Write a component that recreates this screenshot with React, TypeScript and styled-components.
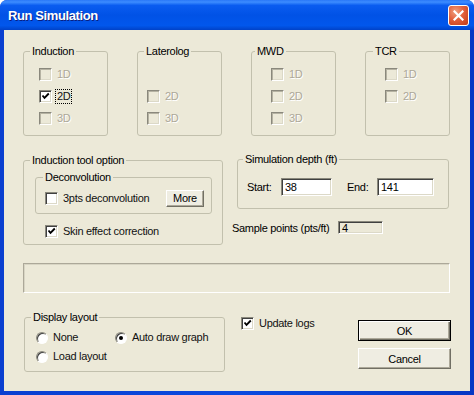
import { FC, ReactNode } from "react";
import styled, { createGlobalStyle } from "styled-components";

const GlobalStyle = createGlobalStyle`
    body {
        margin: 0;
        background: #fff;
        font-family: "Liberation Sans", Arial, sans-serif;
        font-size: 11px;
        letter-spacing: -0.3px;
    }
`;

type GroupProps = { title: string; w?: number; h: number; pad?: string; ml?: number; lx?: number; children: ReactNode };

// group box = fieldset + legend, padding lives on the inner div so the legend stays put
const Group: FC<GroupProps> = ({ title, w, h, pad, ml, lx, children }) => (
    <SGroup $w={w} $h={h} $ml={ml}>
        <SLegend $lx={lx}>{title}</SLegend>
        <SGroupBody $pad={pad}>{children}</SGroupBody>
    </SGroup>
);

export const App: FC = () => {
    return (
        <>
            <GlobalStyle />
            <SWindow>
                <STitleBar>
                    <STitle>Run Simulation</STitle>
                    <SClose aria-label="close">
                        <svg width="11" height="11" viewBox="0 0 11 11">
                            <path d="M1.5 1.5 L9.5 9.5 M9.5 1.5 L1.5 9.5" stroke="#fff" strokeWidth="2.2" strokeLinecap="square" />
                        </svg>
                    </SClose>
                </STitleBar>

                <SBody>
                    {/* tool groups */}
                    <SToolRow>
                        <Group title="Induction" h={91} pad="5px 0 0 15px">
                            <SList>
                                <Check label="1D" disabled />
                                <Check label="2D" checked focused />
                                <Check label="3D" disabled />
                            </SList>
                        </Group>
                        <Group title="Laterolog" h={91} pad="5px 0 0 9px">
                            <SList>
                                <SBlank />
                                <Check label="2D" disabled />
                                <Check label="3D" disabled />
                            </SList>
                        </Group>
                        <Group title="MWD" h={91} pad="5px 0 0 19px" lx={3}>
                            <SList>
                                <Check label="1D" disabled />
                                <Check label="2D" disabled />
                                <Check label="3D" disabled />
                            </SList>
                        </Group>
                        <Group title="TCR" h={91} pad="5px 0 0 19px" lx={7}>
                            <SList>
                                <Check label="1D" disabled />
                                <Check label="2D" disabled />
                            </SList>
                        </Group>
                    </SToolRow>

                    {/* options */}
                    <SOptionRow>
                        <Group title="Induction tool option" w={200} h={91} pad="4px 11px 0">
                            <Group title="Deconvolution" w={177} h={43} pad="3px 7px 0 9px" lx={7}>
                                <SSpread>
                                    <Check label="3pts deconvolution" />
                                    <SButton $w={38} $h={17}>More</SButton>
                                </SSpread>
                            </Group>
                            <SSkinRow>
                                <Check label="Skin effect correction" checked />
                            </SSkinRow>
                        </Group>

                        <SDepthColumn>
                            <Group title="Simulation depth (ft)" w={212} h={56} pad="10px 9px 0" ml={5} lx={5}>
                                <SFieldRow>
                                    <SFieldLabel $w={34}>Start:</SFieldLabel>
                                    <SField $w={51}>38</SField>
                                    <SFieldLabel $w={30} $ml={15}>End:</SFieldLabel>
                                    <SField $w={57}>141</SField>
                                </SFieldRow>
                            </Group>
                            <SSampleRow>
                                <SFieldLabel $w={106}>Sample points (pts/ft)</SFieldLabel>
                                <SField $w={45} $h={13} $readOnly>4</SField>
                            </SSampleRow>
                        </SDepthColumn>
                    </SOptionRow>

                    <SStatus />

                    {/* bottom */}
                    <SBottomRow>
                        <Group title="Display layout" w={201} h={61} pad="4px 11px 0" ml={1}>
                            <SRadioGrid>
                                <Radio label="None" />
                                <Radio label="Auto draw graph" checked />
                                <Radio label="Load layout" />
                            </SRadioGrid>
                        </Group>
                        <SUpdate>
                            <Check label="Update logs" checked />
                        </SUpdate>
                        <SButtons>
                            <SButton $w={93} $h={21} $default>OK</SButton>
                            <SButton $w={93} $h={21}>Cancel</SButton>
                        </SButtons>
                    </SBottomRow>
                </SBody>
            </SWindow>
        </>
    );
};

export default App;

type CheckProps = { label: string; checked?: boolean; disabled?: boolean; focused?: boolean };

const Check: FC<CheckProps> = ({ label, checked, disabled, focused }) => (
    <SCheckItem>
        <SBox $disabled={disabled}>
            {checked && (
                <svg width="9" height="9" viewBox="0 0 9 9">
                    <path d="M1.5 3.5 L3.5 5.8 L7.8 1.5" stroke={disabled ? "#aca899" : "#000"} strokeWidth="1.9" fill="none" />
                </svg>
            )}
        </SBox>
        <SText $disabled={disabled} $focused={focused}>{label}</SText>
    </SCheckItem>
);

const Radio: FC<{ label: string; checked?: boolean }> = ({ label, checked }) => (
    <SCheckItem>
        <SRadio>{checked && <SDot />}</SRadio>
        <SText>{label}</SText>
    </SCheckItem>
);

const SWindow = styled.div`
    width: 474px;
    height: 395px;
    display: flex;
    flex-direction: column;
    background: linear-gradient(to right, #0a3fd0, #0b4be0 50%, #0637c4);
    border-radius: 7px 7px 0 0;
    overflow: hidden;
`;

const STitleBar = styled.div`
    height: 30px;
    flex: none;
    display: flex;
    align-items: center;
    justify-content: space-between;
    padding: 0 5px 0 8px;
    background: linear-gradient(180deg, #2a78f8 0%, #3d8cff 7%, #0a5cf0 18%, #0152e6 50%, #0157ec 85%, #0042c8 100%);
`;

const STitle = styled.span`
    color: #fff;
    font-weight: bold;
    font-size: 13px;
    text-shadow: 1px 1px 0 #0a1e80;
    letter-spacing: -0.4px;
`;

const SClose = styled.div`
    width: 21px;
    height: 21px;
    box-sizing: border-box;
    border: 1px solid #fff;
    border-radius: 3px;
    display: flex;
    align-items: center;
    justify-content: center;
    background: radial-gradient(circle at 35% 30%, #f0a080 0%, #e2603c 45%, #c23a14 100%);
`;

const SBody = styled.div`
    flex: 1;
    margin: 0 4px 4px;
    background: #ece9d8;
    padding: 15px 19px 0;
    display: flex;
    flex-direction: column;
`;

const SGroup = styled.fieldset<{ $w?: number; $h: number; $ml?: number }>`
    margin: 0 0 0 ${p => p.$ml ?? 0}px;
    padding: 0;
    width: ${p => (p.$w ? `${p.$w}px` : "auto")};
    height: ${p => p.$h}px;
    box-sizing: border-box;
    min-width: 0;
    border: 1px solid #c2c0ad;
    border-radius: 3px;
`;

const SLegend = styled.legend<{ $lx?: number }>`
    padding: 0 2px;
    margin-left: ${p => p.$lx ?? 6}px;
    line-height: 13px;
    font-size: 11px;
    color: #000;
`;

const SGroupBody = styled.div<{ $pad?: string }>`
    padding: ${p => p.$pad ?? "0"};
`;

const SToolRow = styled.div`
    display: grid;
    grid-template-columns: repeat(4, 85px);
    column-gap: 29px;
`;

const SList = styled.div`
    display: flex;
    flex-direction: column;
    & > * {
        height: 22px;
    }
`;

const SBlank = styled.div``;

const SCheckItem = styled.label`
    display: flex;
    align-items: center;
    gap: 5px;
    white-space: nowrap;
`;

const SBox = styled.span<{ $disabled?: boolean }>`
    width: 13px;
    height: 13px;
    box-sizing: border-box;
    flex: none;
    display: flex;
    align-items: center;
    justify-content: center;
    border: 1px solid;
    border-color: #8a887c #fff #fff #8a887c;
    box-shadow: inset 1px 1px 0 ${p => (p.$disabled ? "#b5b2a2" : "#404040")}, inset -1px -1px 0 #dcd9c8;
    background: ${p => (p.$disabled ? "#ece9d8" : "#fff")};
`;

const SRadio = styled.span`
    width: 12px;
    height: 12px;
    box-sizing: border-box;
    flex: none;
    border-radius: 50%;
    border: 1px solid;
    border-color: #8a887c #fff #fff #8a887c;
    box-shadow: inset 1px 1px 0 #404040;
    background: #fff;
    display: flex;
    align-items: center;
    justify-content: center;
`;

const SDot = styled.span`
    width: 4px;
    height: 4px;
    border-radius: 50%;
    background: #000;
`;

const SText = styled.span<{ $disabled?: boolean; $focused?: boolean }>`
    color: ${p => (p.$disabled ? "#aca899" : "#111")};
    text-shadow: ${p => (p.$disabled ? "1px 1px 0 #fff" : "none")};
    outline: ${p => (p.$focused ? "1px dotted #000" : "none")};
    padding: 0 1px;
    margin-left: -1px;
    line-height: 13px;
`;

const SOptionRow = styled.div`
    display: flex;
    margin-top: 18px;
`;

const SSpread = styled.div`
    display: flex;
    align-items: center;
    justify-content: space-between;
    height: 22px;
`;

const SSkinRow = styled.div`
    display: flex;
    align-items: center;
    height: 22px;
    margin: 6px 0 0 10px;
`;

const SDepthColumn = styled.div`
    display: flex;
    flex-direction: column;
    margin-left: 9px;
    margin-top: -1px;
`;

const SFieldRow = styled.div`
    display: flex;
    align-items: center;
    height: 22px;
`;

const SFieldLabel = styled.span<{ $w: number; $ml?: number }>`
    width: ${p => p.$w}px;
    margin-left: ${p => p.$ml ?? 0}px;
    flex: none;
    white-space: nowrap;
`;

const SField = styled.div<{ $w: number; $h?: number; $readOnly?: boolean }>`
    width: ${p => p.$w}px;
    height: ${p => p.$h ?? 18}px;
    box-sizing: border-box;
    flex: none;
    display: flex;
    align-items: center;
    padding-left: 3px;
    border: 1px solid;
    border-color: #8a887c #fff #fff #8a887c;
    box-shadow: inset 1px 1px 0 #404040, inset -1px -1px 0 #dcd9c8;
    background: ${p => (p.$readOnly ? "#ece9d8" : "#fff")};
    line-height: 12px;
`;

const SSampleRow = styled.div`
    display: flex;
    align-items: center;
    margin-top: 12px;
`;

const SStatus = styled.div`
    width: 427px;
    height: 30px;
    margin-top: 18px;
    box-sizing: border-box;
    border: 1px solid;
    border-color: #aca899 #fff #fff #aca899;
    box-shadow: inset 1px 1px 0 #d8d5c4;
`;

const SBottomRow = styled.div`
    display: flex;
    align-items: flex-start;
    margin-top: 18px;
`;

const SRadioGrid = styled.div`
    display: grid;
    grid-template-columns: 79px auto;
    grid-auto-rows: 19px;
    align-items: center;
`;

const SUpdate = styled.div`
    display: flex;
    align-items: center;
    height: 16px;
    margin: 4px 0 0 16px;
`;

const SButtons = styled.div`
    display: flex;
    flex-direction: column;
    gap: 7px;
    margin: 9px 0 0 auto;
`;

const SButton = styled.button<{ $w: number; $h: number; $default?: boolean }>`
    width: ${p => p.$w}px;
    height: ${p => p.$h}px;
    box-sizing: border-box;
    padding: 0;
    font-family: "Liberation Sans", Arial, sans-serif;
    font-size: 11px;
    letter-spacing: -0.3px;
    color: #000;
    background: #efede2;
    border: 1px solid;
    border-color: ${p => (p.$default ? "#000" : "#fff #716f64 #716f64 #fff")};
    box-shadow: ${p =>
        p.$default
            ? "inset 1px 1px 0 #fff, inset -1px -1px 0 #716f64, inset -2px -2px 0 #aca899"
            : "inset -1px -1px 0 #aca899"};
`;
